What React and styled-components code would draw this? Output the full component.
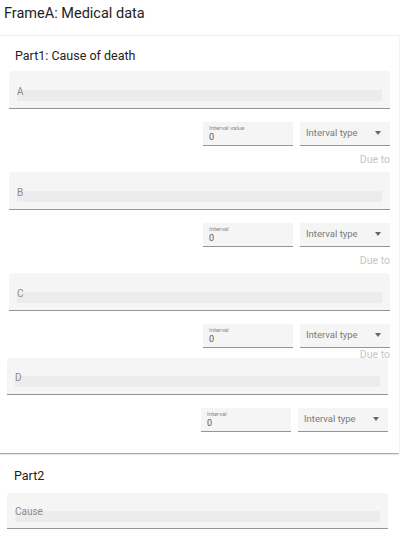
import React from "react";
import styled, { createGlobalStyle } from "styled-components";

const GlobalStyle = createGlobalStyle`
  body {
    margin: 0;
    background: #fff;
    font-family: Roboto, "Liberation Sans", sans-serif;
    color: #222;
    overflow: hidden;
  }
`;

const Page = styled.div`
  width: 400px;
  height: 542px;
  display: flex;
  flex-direction: column;
`;

const Header = styled.div`
  height: 36px;
  padding: 5px 0 0 4px;
  box-sizing: border-box;
  font-size: 14.5px;
  border-bottom: 1px solid #f2f2f2;
`;

const Card = styled.section`
  margin-left: -4px;
  width: 403px;
  padding-bottom: 21px;
  box-shadow: 0 2px 1px -1px rgba(0, 0, 0, 0.2), 0 1px 1px 0 rgba(0, 0, 0, 0.12),
    0 1px 3px 0 rgba(0, 0, 0, 0.1);
  display: flex;
  flex-direction: column;
`;

const Title = styled.h3`
  margin: 0;
  font-weight: 400;
  font-size: 12.5px;
  padding: ${(p) => p.$pad || "12px 0 0 19px"};
  height: ${(p) => p.$h || "35px"};
  box-sizing: border-box;
`;

const Block = styled.div`
  display: flex;
  flex-direction: column;
  padding: 0 ${(p) => 9 + (p.$shift || 0)}px 0 ${(p) => 13 - (p.$shift || 0)}px;
`;

const Field = styled.div`
  position: relative;
  height: ${(p) => p.$h || 38}px;
  box-sizing: border-box;
  background: #f5f5f5;
  border-radius: 4px 4px 0 0;
  border-bottom: 1px solid #959595;
  padding: ${(p) => (p.$h ? 18 : 19)}px 8px 0 8px;
`;

const Track = styled.div`
  height: 11px;
  background: #ececec;
`;

const FieldLabel = styled.span`
  position: absolute;
  left: 8px;
  top: ${(p) => p.$top || 15}px;
  font-size: ${(p) => p.$size || 10}px;
  color: #8c8c8c;
`;

const IntervalRow = styled.div`
  display: flex;
  justify-content: flex-end;
  gap: 7px;
  margin-top: 13px;
`;

const SmallField = styled.div`
  width: 90px;
  height: 24px;
  box-sizing: border-box;
  background: #f5f5f5;
  border-bottom: 1px solid #959595;
  padding: 2px 6px 0;
  display: flex;
  flex-direction: column;
`;

const Tiny = styled.span`
  font-size: 6px;
  color: #8a8a8a;
  line-height: 7px;
`;

const Value = styled.span`
  font-size: 9px;
  color: #555;
  line-height: 13px;
`;

const Select = styled(SmallField)`
  flex-direction: row;
  align-items: center;
  justify-content: space-between;
  padding: 0 9px 2px 6px;
  font-size: 9.5px;
  color: #7a7a7a;
`;

const Arrow = styled.span`
  width: 0;
  height: 0;
  border-left: 3.5px solid transparent;
  border-right: 3.5px solid transparent;
  border-top: 4px solid #666;
`;

const DueTo = styled.div`
  height: ${(p) => (p.$clip ? 10 : 26)}px;
  overflow: hidden;
  display: flex;
  justify-content: flex-end;
  align-items: ${(p) => (p.$clip ? "flex-end" : "center")};
  font-size: 10.5px;
  color: #c6c6c6;
  line-height: ${(p) => (p.$clip ? "7px" : "12px")};
  padding-top: ${(p) => (p.$clip ? 0 : 2)}px;
  box-sizing: border-box;
`;

const Part2 = styled.section`
  display: flex;
  flex-direction: column;
  padding: 0 12px 0 7px;
`;

const Segment = ({ letter, tiny, shift, last }) => (
  <Block $shift={shift}>
    <Field $h={shift ? 37 : 0}>
      <Track />
      <FieldLabel $top={shift ? 14 : 15}>{letter}</FieldLabel>
    </Field>
    <IntervalRow>
      <SmallField>
        <Tiny>{tiny}</Tiny>
        <Value>0</Value>
      </SmallField>
      <Select>
        Interval type
        <Arrow />
      </Select>
    </IntervalRow>
    {!last && <DueTo $clip={letter === "C"}>Due to</DueTo>}
  </Block>
);

const App = () => {
  return (
    <Page>
      <GlobalStyle />
      <Header>FrameA: Medical data</Header>
      <Card>
        <Title>Part1: Cause of death</Title>
        <Segment letter="A" tiny="Interval value" />
        <Segment letter="B" tiny="Interval" />
        <Segment letter="C" tiny="Interval" />
        <Segment letter="D" tiny="Interval" shift={2} last />
      </Card>
      <Part2>
        <Title $pad="15px 0 0 7px" $h="40px">
          Part2
        </Title>
        <Field $h={36}>
          <Track />
          <FieldLabel $top={13}>Cause</FieldLabel>
        </Field>
      </Part2>
    </Page>
  );
};

export default App;
